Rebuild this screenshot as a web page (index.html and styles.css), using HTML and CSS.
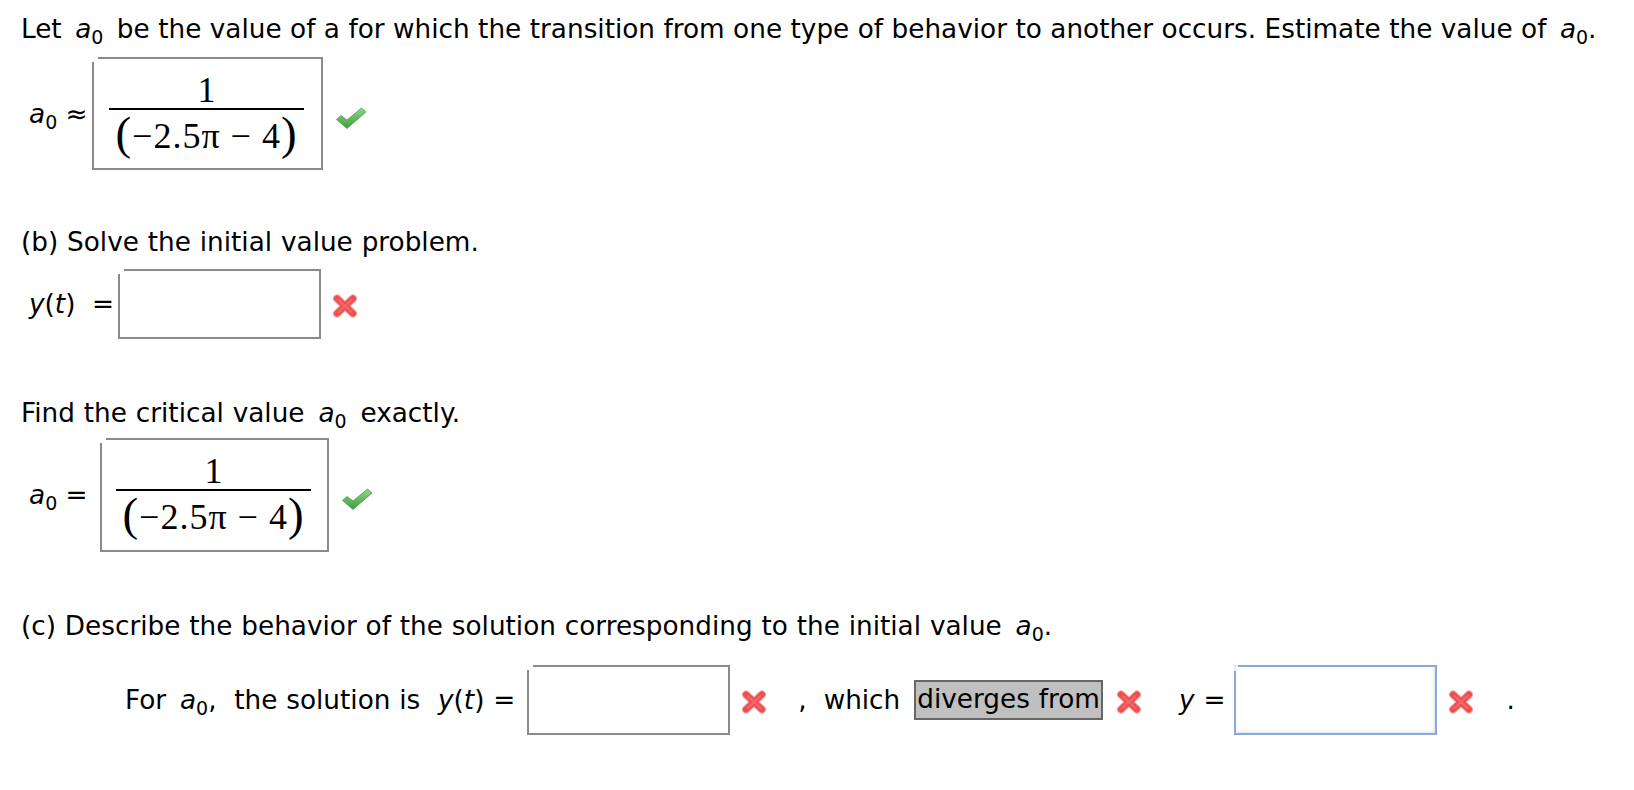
FILE: index.html
```html
<!DOCTYPE html>
<html>
<head>
<meta charset="utf-8">
<link rel="stylesheet" href="styles.css">
</head>
<body>
<div class="page">
  <p class="line first">Let <span class="m"><i>a</i><sub>0</sub></span> be the value of a for which the transition from one type of behavior to another occurs. Estimate the value of <span class="m me"><i>a</i><sub>0</sub></span>.</p>

  <div class="row r1">
    <span class="lbl lbl1"><span class="m0"><i>a</i><sub>0</sub></span> ≈</span>
    <div class="box mathbox mb1">
      <span class="frac">
        <span class="num">1</span>
        <span class="bar"></span>
        <span class="den"><span class="paren">(</span>−2.5π<span class="op">−</span>4<span class="paren">)</span></span>
      </span>
    </div>
    <svg class="check" viewBox="0 0 32 22" width="32" height="22"><defs><linearGradient id="g1" x1="0" y1="0" x2="0" y2="1"><stop offset="0" stop-color="#8ed68a"/><stop offset="1" stop-color="#3f9c3d"/></linearGradient></defs><path d="M1.5 12.5 L6 8.5 L12 13 L26.5 1 L31 5 L12 21.5 Z" fill="url(#g1)" stroke="#4c9d49" stroke-width="0.8" stroke-linejoin="round"/></svg>
  </div>

  <p class="line sec s1">(b) Solve the initial value problem.</p>

  <div class="row r2">
    <span class="lbl lbl2"><i>y</i>(<i>t</i>) &nbsp;=</span>
    <div class="box inbox"></div>
    <svg class="cross" viewBox="0 0 26 24" width="26" height="24"><g stroke-linecap="round"><path d="M5 4.5 L21 19.5 M21 4.5 L5 19.5" stroke="#f6a0a0" stroke-width="8"/><path d="M5 4.5 L21 19.5 M21 4.5 L5 19.5" stroke="#ee4e4e" stroke-width="6"/><path d="M6.5 6 L19.5 18 M19.5 6 L6.5 18" stroke="#f46a6a" stroke-width="2"/></g></svg>
  </div>

  <p class="line sec">Find the critical value <span class="m"><i>a</i><sub>0</sub></span> exactly.</p>

  <div class="row r3">
    <span class="lbl lbl3"><span class="m0"><i>a</i><sub>0</sub></span> =</span>
    <div class="box mathbox mb3">
      <span class="frac">
        <span class="num">1</span>
        <span class="bar"></span>
        <span class="den"><span class="paren">(</span>−2.5π<span class="op">−</span>4<span class="paren">)</span></span>
      </span>
    </div>
    <svg class="check" viewBox="0 0 32 22" width="32" height="22"><defs><linearGradient id="g2" x1="0" y1="0" x2="0" y2="1"><stop offset="0" stop-color="#8ed68a"/><stop offset="1" stop-color="#3f9c3d"/></linearGradient></defs><path d="M1.5 12.5 L6 8.5 L12 13 L26.5 1 L31 5 L12 21.5 Z" fill="url(#g2)" stroke="#4c9d49" stroke-width="0.8" stroke-linejoin="round"/></svg>
  </div>

  <p class="line sec">(c) Describe the behavior of the solution corresponding to the initial value <span class="m me"><i>a</i><sub>0</sub></span>.</p>

  <div class="row r4">
    <span class="t4a">For <span class="m me"><i>a</i><sub>0</sub></span>, &nbsp;the solution is &nbsp;<i>y</i>(<i>t</i>) =</span>
    <div class="box inbox c1"></div>
    <svg class="cross x1" viewBox="0 0 26 24" width="26" height="24"><g stroke-linecap="round"><path d="M5 4.5 L21 19.5 M21 4.5 L5 19.5" stroke="#f6a0a0" stroke-width="8"/><path d="M5 4.5 L21 19.5 M21 4.5 L5 19.5" stroke="#ee4e4e" stroke-width="6"/><path d="M6.5 6 L19.5 18 M19.5 6 L6.5 18" stroke="#f46a6a" stroke-width="2"/></g></svg>
    <span class="t4b">,</span>
    <span class="t4c">which</span>
    <span class="sel">diverges from</span>
    <svg class="cross x2" viewBox="0 0 26 24" width="26" height="24"><g stroke-linecap="round"><path d="M5 4.5 L21 19.5 M21 4.5 L5 19.5" stroke="#f6a0a0" stroke-width="8"/><path d="M5 4.5 L21 19.5 M21 4.5 L5 19.5" stroke="#ee4e4e" stroke-width="6"/><path d="M6.5 6 L19.5 18 M19.5 6 L6.5 18" stroke="#f46a6a" stroke-width="2"/></g></svg>
    <span class="t4d"><i>y</i> =</span>
    <div class="box inbox blue c2"></div>
    <svg class="cross x3" viewBox="0 0 26 24" width="26" height="24"><g stroke-linecap="round"><path d="M5 4.5 L21 19.5 M21 4.5 L5 19.5" stroke="#f6a0a0" stroke-width="8"/><path d="M5 4.5 L21 19.5 M21 4.5 L5 19.5" stroke="#ee4e4e" stroke-width="6"/><path d="M6.5 6 L19.5 18 M19.5 6 L6.5 18" stroke="#f46a6a" stroke-width="2"/></g></svg>
    <span class="t4e">.</span>
  </div>
</div>
</body>
</html>
```
FILE: styles.css
```css
html, body {
  margin: 0;
  background: #ffffff;
  color: #000000;
}

.page {
  padding: 14px 0 0 21px;
  font-family: "DejaVu Sans", Verdana, sans-serif;
  font-size: 26.3px;
  line-height: 30px;
  word-spacing: 0.5px;
}

.line {
  margin: 0;
  white-space: nowrap;
}

.line.first {
  word-spacing: 0.1px;
}

.line.sec {
  margin-top: 59px;
}

.line.sec.s1 {
  margin-top: 57px;
}

.m {
  margin: 0 5px;
  white-space: nowrap;
}

.m.me {
  margin-right: 0;
}

.m0 {
  white-space: nowrap;
}

i {
  font-style: italic;
}

sub {
  font-size: 19px;
  font-style: normal;
  line-height: 0;
  vertical-align: -6px;
}

.row {
  display: flex;
  align-items: center;
  white-space: nowrap;
  word-spacing: 0;
}

.r1 {
  margin-top: 13px;
  padding-left: 8px;
}

.r2 {
  margin-top: 12px;
  padding-left: 8px;
}

.r3 {
  margin-top: 10px;
  padding-left: 8px;
}

.r4 {
  margin-top: 24px;
  padding-left: 104px;
  word-spacing: 0.5px;
}

.lbl1 { width: 63px; }
.lbl2 { width: 89px; }
.lbl3 { width: 71px; }

/* input box with notched top-left corner */
.box {
  position: relative;
  box-sizing: border-box;
  border-right: 2px solid #8a8a8a;
  border-bottom: 2px solid #8a8a8a;
  background: #ffffff;
}

.box::before {
  content: "";
  position: absolute;
  top: 0;
  left: 6px;
  right: -2px;
  border-top: 2px solid #8a8a8a;
}

.box::after {
  content: "";
  position: absolute;
  top: 5px;
  left: 0;
  bottom: -2px;
  border-left: 2px solid #8a8a8a;
}

.mathbox {
  display: flex;
  justify-content: center;
  align-items: flex-start;
  padding-top: 15px;
}

.mb1 {
  width: 231px;
  height: 113px;
}

.mb3 {
  width: 229px;
  height: 114px;
}

.frac {
  display: flex;
  flex-direction: column;
  font-family: "Liberation Serif", "Times New Roman", serif;
  font-size: 36px;
  line-height: 36px;
  word-spacing: 0;
}

.num,
.den {
  display: block;
  text-align: center;
  padding: 0 6px;
}

.den {
  margin-top: 8px;
  letter-spacing: 1px;
}

.bar {
  display: block;
  height: 2px;
  background: #000000;
}

.paren {
  font-size: 47px;
  line-height: 0;
  position: relative;
  top: 1px;
}

.op {
  margin: 0 10px;
}

.check {
  margin-left: 12px;
  margin-top: 8px;
}

.inbox {
  width: 203px;
  height: 70px;
}

.cross {
  margin-left: 11px;
  margin-top: 3px;
}

.r4 .c1 {
  margin-left: 12px;
}

.t4b {
  margin-left: 31px;
}

.t4c {
  margin-left: 17px;
}

.sel {
  margin-left: 14px;
  box-sizing: border-box;
  height: 40px;
  line-height: 34px;
  padding: 0 1px;
  background: #c0c0c0;
  border: 2px solid #666666;
}

.r4 .x2 {
  margin-left: 13px;
}

.t4d {
  margin-left: 37px;
}

.r4 .c2 {
  margin-left: 9px;
}

.blue {
  border-right-color: #8aaad4;
  border-bottom-color: #8aaad4;
  box-shadow: inset 0 0 4px rgba(120, 160, 210, 0.45);
}

.blue::before {
  border-top-color: #8aaad4;
  left: 4px;
}

.blue::after {
  border-left-color: #8aaad4;
  top: 6px;
}

.t4e {
  margin-left: 32px;
}
```
